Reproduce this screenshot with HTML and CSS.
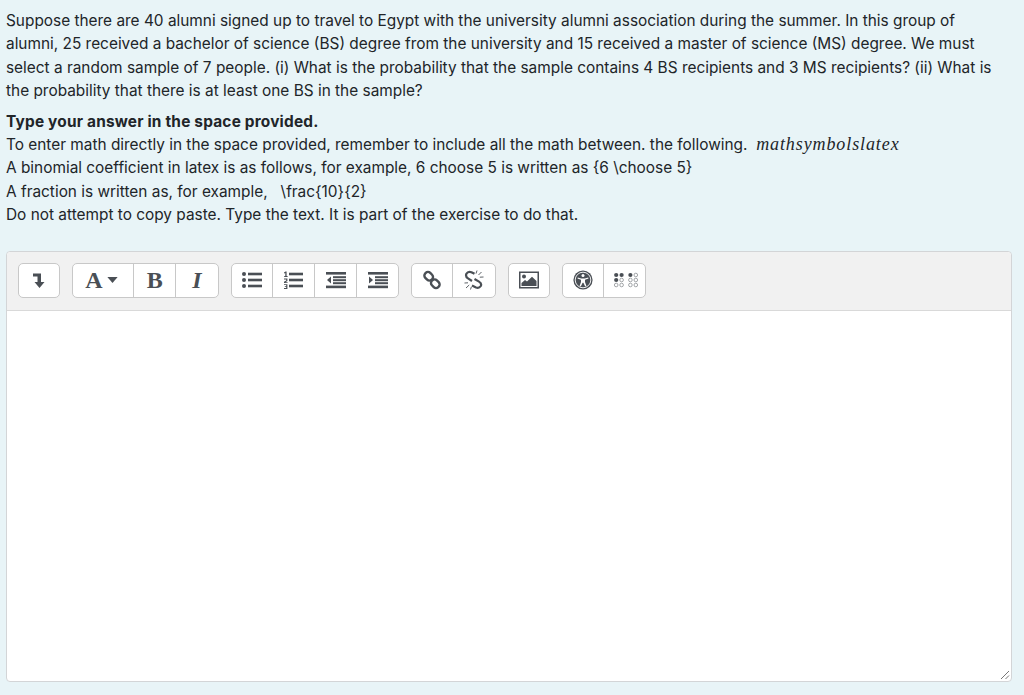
FILE: index.html
```html
<!DOCTYPE html>
<html lang="en">
<head>
<meta charset="UTF-8" />
<title>Question</title>
<link rel="stylesheet" href="styles.css">
</head>
<body>

<div class="question">
  <p class="qtext">Suppose there are 40 alumni signed up to travel to Egypt with the university alumni association during the summer. In this group of alumni, 25 received a bachelor of science (BS) degree from the university and 15 received a master of science (MS) degree. We must select a random sample of 7 people. (i) What is the probability that the sample contains 4 BS recipients and 3 MS recipients? (ii) What is the probability that there is at least one BS in the sample?</p>
  <p class="hint">
    <strong>Type your answer in the space provided.</strong><br>
    To enter math directly in the space provided, remember to include all the math between. the following. &nbsp;<span class="math">mathsymbolslatex</span><br>
    A binomial coefficient in latex is as follows, for example, 6 choose 5 is written as {6 \choose 5}<br>
    A fraction is written as, for example, &nbsp; \frac{10}{2}<br>
    Do not attempt to copy paste. Type the text. It is part of the exercise to do that.
  </p>
</div>

<div class="editor">
  <div class="toolbar">
    <div class="group">
      <button class="btn" aria-label="Show more">
        <svg viewBox="0 0 20 20"><path d="M4 3.5 H12 V12 H15.5 L10.5 18 L5.5 12 H8.5 V6.5 H4 Z" /></svg>
      </button>
    </div>
    <div class="group">
      <button class="btn btn-wide" aria-label="Paragraph styles">
        <span class="letter">A</span>
        <svg class="caret" viewBox="0 0 12 7"><path d="M0 0 H12 L6 7 Z" /></svg>
      </button>
      <button class="btn letter" aria-label="Bold">B</button>
      <button class="btn letter letter-i" aria-label="Italic">I</button>
    </div>
    <div class="group">
      <button class="btn" aria-label="Bullet list">
        <svg viewBox="0 0 20 20">
          <circle cx="2" cy="4" r="2" /><circle cx="2" cy="10" r="2" /><circle cx="2" cy="16" r="2" />
          <rect x="6" y="2.7" width="14" height="2.6" /><rect x="6" y="8.7" width="14" height="2.6" /><rect x="6" y="14.7" width="14" height="2.6" />
        </svg>
      </button>
      <button class="btn" aria-label="Numbered list">
        <svg viewBox="0 0 20 20">
          <path d="M1 2.5 L2.6 1.5 H3.6 V6 H4.6 V7 H1.2 V6 H2.3 V3 L1 3.6 Z" />
          <path d="M1 8.5 H4.4 V11 L2.4 12.2 H4.6 V13 H1 V11.8 L3.2 10.4 V9.4 H1 Z" />
          <path d="M1 14.2 H4.4 V19 H1 V18.1 H3.2 V17 H1.8 V16.2 H3.2 V15.1 H1 Z" />
          <rect x="6" y="2.7" width="14" height="2.6" /><rect x="6" y="8.7" width="14" height="2.6" /><rect x="6" y="14.7" width="14" height="2.6" />
        </svg>
      </button>
      <button class="btn" aria-label="Decrease indent">
        <svg viewBox="0 0 20 20">
          <rect y="2" width="20" height="2.6" /><rect x="7" y="6.2" width="13" height="2" /><rect x="7" y="9.2" width="13" height="2" /><rect x="7" y="12.2" width="13" height="2" /><rect y="15.6" width="20" height="2.6" />
          <path d="M5 6.5 V13.5 L1 10 Z" />
        </svg>
      </button>
      <button class="btn" aria-label="Increase indent">
        <svg viewBox="0 0 20 20">
          <rect y="2" width="20" height="2.6" /><rect x="7" y="6.2" width="13" height="2" /><rect x="7" y="9.2" width="13" height="2" /><rect x="7" y="12.2" width="13" height="2" /><rect y="15.6" width="20" height="2.6" />
          <path d="M1 6.5 V13.5 L5 10 Z" />
        </svg>
      </button>
    </div>
    <div class="group">
      <button class="btn" aria-label="Link">
        <svg viewBox="0 0 20 20" class="chain">
          <rect x="2.2" y="2.8" width="9" height="7" rx="3.2" transform="rotate(45 6.7 6.3)" />
          <rect x="8.8" y="10.2" width="9" height="7" rx="3.2" transform="rotate(45 13.3 13.7)" />
        </svg>
      </button>
      <button class="btn" aria-label="Unlink">
        <svg viewBox="0 0 20 20" class="unlink">
          <path d="M10.5 3.8 L7.5 2.2 Q4 1 2.4 3.8 Q1.2 6.6 4 8.4 L8 11" />
          <path d="M10.5 9 L15 11.6 Q18 13.4 16.8 16 Q15 18.8 12 17.6 L8 15.6" />
          <path class="spark" d="M13 .5 L12 3.6 M17.5 2 L14.5 5 M19.5 7 L15.8 7.2 M.5 13 L4 12.8 M2 18 L5.2 15 M6.5 19.5 L7.4 16.8" />
        </svg>
      </button>
    </div>
    <div class="group">
      <button class="btn" aria-label="Image">
        <svg viewBox="0 0 20 20">
          <path fill-rule="evenodd" d="M0 1.5 H20 V18.5 H0 Z M1.5 3 V17 H18.5 V3 Z" />
          <circle cx="5" cy="6.5" r="2" />
          <path d="M2.5 16 V13 L6 10 L8 11.5 L13 6.8 L17.5 11 V16 Z" />
        </svg>
      </button>
    </div>
    <div class="group">
      <button class="btn" aria-label="Accessibility checker">
        <svg viewBox="0 0 20 20">
          <circle cx="10" cy="10" r="9.6" />
          <circle class="ring" cx="10" cy="10" r="7.8" />
          <circle class="fig" cx="10" cy="5.6" r="1.5" />
          <path class="fig" d="M4.8 7.4 L8.2 8.4 H11.8 L15.2 7.4 L15.5 8.5 L12 9.8 V12 L13.4 16 L12.2 16.4 L10.4 12.8 H9.6 L7.8 16.4 L6.6 16 L8 12 V9.8 L4.5 8.5 Z" />
        </svg>
      </button>
      <button class="btn" aria-label="Braille checker">
        <svg viewBox="0 0 24 16" class="braille">
          <circle class="on" cx="2.2" cy="3" r="2.1" /><circle class="on" cx="7.6" cy="3" r="2.1" />
          <circle class="on" cx="2.2" cy="8" r="2.1" /><circle cx="7.6" cy="8" r="1.8" />
          <circle cx="2.2" cy="13" r="1.8" /><circle cx="7.6" cy="13" r="1.8" />
          <circle class="on" cx="16.4" cy="3" r="2.1" /><circle cx="21.8" cy="3" r="1.8" />
          <circle cx="16.4" cy="8" r="1.8" /><circle cx="21.8" cy="8" r="1.8" />
          <circle cx="16.4" cy="13" r="1.8" /><circle cx="21.8" cy="13" r="1.8" />
        </svg>
      </button>
    </div>
  </div>
  <div class="content">
    <svg class="grip" viewBox="0 0 10 10"><path d="M1 9 L9 1 M5.5 9 L9 5.5" /></svg>
  </div>
</div>

</body>
</html>
```

FILE: styles.css
```css
body {
  margin: 0;
  height: 695px;
  padding: 9px 12px 0 6px;
  box-sizing: border-box;
  overflow: hidden;
  background: #e8f4f7;
  color: #212529;
  font-family: Inter, "Noto Sans", sans-serif;
  font-size: 15.4px;
  line-height: 23.4px;
}

p {
  margin: 0;
}

.qtext {
  margin-bottom: 7px;
  padding-right: 8px;
}

.hint strong {
  font-weight: 700;
  letter-spacing: 0.2px;
}

.math {
  font-family: "Liberation Serif", serif;
  font-style: italic;
  font-size: 18px;
  letter-spacing: 0.9px;
}

/* Editor */
.editor {
  margin-top: 24px;
  height: 431px;
  display: flex;
  flex-direction: column;
  box-sizing: border-box;
  border: 1px solid #d3d5d7;
  border-radius: 4px;
  background: #fff;
}

.toolbar {
  display: flex;
  gap: 12px;
  height: 59px;
  padding: 11px 11px 0;
  box-sizing: border-box;
  flex-shrink: 0;
  background: #f1f1f1;
  border-bottom: 1px solid #d9d9d9;
  border-radius: 4px 4px 0 0;
}

.group {
  display: flex;
  height: 35px;
  box-sizing: border-box;
  border: 1px solid #c8c8c8;
  border-radius: 5px;
  background: #fff;
}

.btn {
  width: 42.3px;
  height: 100%;
  padding: 0;
  display: flex;
  align-items: center;
  justify-content: center;
  gap: 4px;
  border: 0;
  border-left: 1px solid #c8c8c8;
  background: transparent;
  color: #4a4f55;
  fill: #4a4f55;
}

.btn:first-child {
  width: 40px;
  border-left: 0;
}

.btn svg {
  width: 20px;
  height: 20px;
}

.btn-wide:first-child {
  width: 60px;
  padding-right: 3px;
}

.btn .caret {
  width: 11px;
  height: 6px;
}

.letter {
  font-family: "Liberation Serif", serif;
  font-size: 24px;
  font-weight: 700;
  line-height: 1;
}

.letter-i {
  font-style: italic;
}

.chain rect {
  fill: none;
  stroke: #4a4f55;
  stroke-width: 2.4;
}

.unlink path {
  fill: none;
  stroke: #4a4f55;
  stroke-width: 2.2;
}

.unlink .spark {
  stroke-width: 0.9;
}

.ring {
  fill: none;
  stroke: #fff;
  stroke-width: 0.9;
}

.fig {
  fill: #fff;
}

.btn .braille {
  width: 24px;
  height: 16px;
  margin-left: 4px;
}

.braille circle {
  fill: #fff;
  stroke: #8b8f93;
  stroke-width: 0.8;
}

.braille .on {
  fill: #4a4f55;
  stroke: none;
}

.content {
  flex-grow: 1;
  display: flex;
  align-items: flex-end;
  justify-content: flex-end;
  padding: 0 1px 1px 0;
}

.grip {
  width: 10px;
  height: 10px;
  fill: none;
  stroke: #777;
  stroke-width: 1;
}
```
